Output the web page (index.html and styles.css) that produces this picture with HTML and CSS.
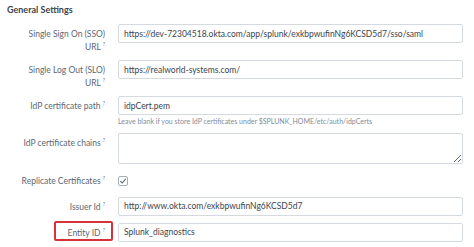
FILE: index.html
```html
<html lang="en">
<head>
  <meta charset="UTF-8">
  <title>General Settings</title>
  <link rel="stylesheet" href="styles.css">
</head>
<body>
  <h3 class="section-title">General Settings</h3>

  <div class="form-row">
    <label class="field-label" for="sso">Single Sign On (SSO)<br>URL <sup>?</sup></label>
    <input class="text-input" type="text" id="sso" value="https://dev-72304518.okta.com/app/splunk/exkbpwufinNg6KCSD5d7/sso/saml">
  </div>

  <div class="form-row">
    <label class="field-label" for="slo">Single Log Out (SLO)<br>URL <sup>?</sup></label>
    <input class="text-input" type="text" id="slo" value="https://realworld-systems.com/">
  </div>

  <div class="form-row">
    <label class="field-label" for="certpath">IdP certificate path <sup>?</sup></label>
    <div class="field">
      <input class="text-input" type="text" id="certpath" value="idpCert.pem">
      <p class="help">Leave blank if you store IdP certificates under $SPLUNK_HOME/etc/auth/idpCerts</p>
    </div>
  </div>

  <div class="form-row">
    <label class="field-label" for="chains">IdP certificate chains <sup>?</sup></label>
    <textarea class="text-area" id="chains"></textarea>
  </div>

  <div class="form-row form-row-check">
    <label class="field-label">Replicate Certificates <sup>?</sup></label>
    <span class="checkbox">
      <svg width="8" height="8" viewBox="0 0 8 8"><path d="M1.3 4.1 L3.2 6 L6.7 1.9" fill="none" stroke="#5c6773" stroke-width="1.1"/></svg>
    </span>
  </div>

  <div class="form-row">
    <label class="field-label" for="issuer">Issuer Id <sup>?</sup></label>
    <input class="text-input" type="text" id="issuer" value="http://www.okta.com/exkbpwufinNg6KCSD5d7">
  </div>

  <div class="form-row">
    <label class="field-label highlight" for="entity">Entity ID <sup>?</sup></label>
    <input class="text-input" type="text" id="entity" value="Splunk_diagnostics">
  </div>
</body>
</html>
```

FILE: styles.css
```css
body {
  margin: 0;
  padding: 4px 0 0 7px;
  background: #fff;
  font-family: 'Lato', 'Liberation Sans', sans-serif;
  color: #5c6773;
}
.section-title {
  margin: 0 0 9px;
  font-size: 9px;
  font-weight: bold;
  color: #3c444d;
}
.form-row {
  display: flex;
  align-items: flex-start;
  margin-bottom: 7px;
}
.form-row-check {
  margin-bottom: 9px;
}
.field-label {
  flex: none;
  width: 106px;
  box-sizing: border-box;
  padding: 4px 8px 0 0;
  text-align: right;
  font-size: 8.5px;
  line-height: 12.5px;
  color: #5c6773;
}
.field-label sup {
  font-size: 5px;
  line-height: 0;
  vertical-align: 4px;
}
.field {
  width: 350px;
}
.text-input {
  display: block;
  width: 345px;
  height: 19px;
  box-sizing: border-box;
  margin: 0 0 0 5px;
  padding: 0 5px;
  border: 1px solid #d5dae0;
  border-radius: 2px;
  font-family: inherit;
  font-size: 8.5px;
  color: #3c444d;
  background: #fff;
}
.help {
  margin: 2px 0 0 5px;
  font-size: 7px;
  line-height: 9px;
  color: #818d99;
}
.text-area {
  display: block;
  width: 345px;
  height: 31px;
  box-sizing: border-box;
  margin: 0 0 0 5px;
  border: 1px solid #d5dae0;
  border-radius: 2px;
}
.checkbox {
  display: flex;
  align-items: center;
  justify-content: center;
  width: 10px;
  height: 10px;
  box-sizing: border-box;
  margin: 5px 0 0 5px;
  border: 1px solid #a6aeb7;
  border-radius: 2px;
}
.highlight {
  position: relative;
}
.highlight::after {
  content: "";
  position: absolute;
  left: 47px;
  right: 0;
  top: -2px;
  height: 20px;
  box-sizing: border-box;
  border: 2px solid #d6323b;
  border-radius: 2px;
}
```
